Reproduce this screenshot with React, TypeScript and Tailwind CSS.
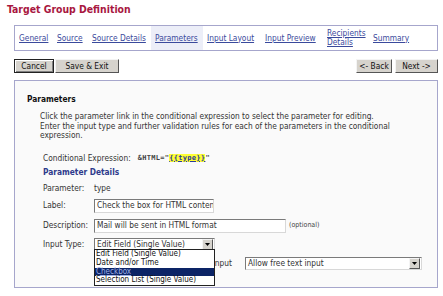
import React from "react";

const F = { fontFamily: '"DejaVu Sans Condensed", "DejaVu Sans", sans-serif' };

function NavItem({ w, children, active }: { w: string; children: React.ReactNode; active?: boolean }) {
  return (
    <div className={`${w} h-full flex items-center pl-[4px] ${active ? "bg-[#eceef8]" : ""}`}>
      <span className="text-[#3a4a9c] underline leading-[9px]">{children}</span>
    </div>
  );
}

function Btn({ w, children, def }: { w: string; children: React.ReactNode; def?: boolean }) {
  return (
    <div
      className={`${w} h-[14px] flex items-center justify-center bg-[#d6d3cd] text-[#111] ${
        def
          ? "border border-[#222] shadow-[inset_1px_1px_0_#fff,inset_-1px_-1px_0_#808080]"
          : "border-t border-l border-t-[#f4f4f4] border-l-[#f4f4f4] border-r border-b border-r-[#555] border-b-[#555]"
      }`}
    >
      {children}
    </div>
  );
}

function Arrow() {
  return (
    <div className="w-[11px] h-[11px] bg-[#d6d3cd] border border-t-[#f4f4f4] border-l-[#f4f4f4] border-r-[#555] border-b-[#555] flex items-center justify-center">
      <svg width="5" height="3" viewBox="0 0 5 3">
        <path d="M0 0 H5 L2.5 3 Z" fill="#000" />
      </svg>
    </div>
  );
}

export default function App() {
  return (
    <div className="w-[443px] h-[296px] bg-white overflow-hidden relative text-[8.3px] text-[#222]" style={F}>
      <div className="pl-[7px] pt-[3px] h-[25px]">
        <div className="text-[10.4px] font-bold text-[#a8173f] leading-[13px]">Target Group Definition</div>
      </div>
      <div className="ml-[14px] w-[424px] h-[26px] border border-[#a6a6cc] flex items-stretch bg-white">
        <NavItem w="w-[38px]">General</NavItem>
        <NavItem w="w-[35px]">Source</NavItem>
        <NavItem w="w-[63px]">Source Details</NavItem>
        <NavItem w="w-[52px]" active>Parameters</NavItem>
        <NavItem w="w-[58px]">Input Layout</NavItem>
        <NavItem w="w-[62px]">Input Preview</NavItem>
        <NavItem w="w-[46px]">
          Recipients
          <br />
          Details
        </NavItem>
        <NavItem w="w-[46px]">Summary</NavItem>
      </div>
      <div className="ml-[14px] w-[424px] mt-[8px] flex justify-between">
        <div className="flex gap-[1px]">
          <Btn w="w-[40px]" def>Cancel</Btn>
          <Btn w="w-[64px]">Save &amp; Exit</Btn>
        </div>
        <div className="flex gap-[3px]">
          <Btn w="w-[36px]">&lt;- Back</Btn>
          <Btn w="w-[43px]">Next -&gt;</Btn>
        </div>
      </div>
      <div className="ml-[14px] w-[424px] mt-[7px] h-[208px] border border-[#a6a6cc] bg-[#fafafa] relative">
        <div className="pl-[12px] pt-[13px] font-bold leading-[10px] text-[#111]">Parameters</div>
        <div className="pl-[25px] mt-[8px] leading-[9.5px] whitespace-nowrap text-[#333]">
          <div>Click the parameter link in the conditional expression to select the parameter for editing.</div>
          <div>Enter the input type and further validation rules for each of the parameters in the conditional</div>
          <div>expression.</div>
        </div>
        <div className="pl-[28px] mt-[12px] leading-[10px] flex items-center text-[#333]">
          <span>Conditional Expression:</span>
          <span
            className="ml-[7px] text-[7px] font-bold text-[#444] tracking-[0.3px]"
            style={{ fontFamily: '"DejaVu Sans Mono", monospace' }}
          >
            &amp;HTML=&quot;<span className="bg-[#ffff33] text-[#2a3a9c] underline">{"{{type}}"}</span>&quot;
          </span>
        </div>
        <div className="pl-[28px] mt-[4px] leading-[10px] font-bold text-[#2e3a8c]">Parameter Details</div>
        <div className="pl-[28px] mt-[6px] leading-[10px] flex text-[#333]">
          <span className="w-[51px]">Parameter:</span>
          <span>type</span>
        </div>
        <div className="pl-[28px] mt-[6px] flex items-center text-[#333]">
          <span className="w-[51px]">Label:</span>
          <div className="w-[120px] h-[14px] bg-white border border-t-[#7a7a7a] border-l-[#7a7a7a] border-r-[#d8d8d8] border-b-[#d8d8d8] flex items-center pl-[2px] overflow-hidden whitespace-nowrap">
            Check the box for HTML content
          </div>
        </div>
        <div className="pl-[28px] mt-[6px] flex items-center text-[#333]">
          <span className="w-[51px]">Description:</span>
          <div className="w-[192px] h-[14px] bg-white border border-t-[#7a7a7a] border-l-[#7a7a7a] border-r-[#d8d8d8] border-b-[#d8d8d8] flex items-center pl-[2px] overflow-hidden whitespace-nowrap">
            Mail will be sent in HTML format
          </div>
          <span className="ml-[3px] text-[7px] text-[#444]">(optional)</span>
        </div>
        <div className="pl-[28px] mt-[5px] flex items-center text-[#333]">
          <span className="w-[51px]">Input Type:</span>
          <div className="w-[121px] h-[13px] bg-white border border-t-[#7a7a7a] border-l-[#7a7a7a] border-r-[#d8d8d8] border-b-[#d8d8d8] flex items-center justify-between pl-[2px] pr-[1px] whitespace-nowrap">
            <span>Edit Field (Single Value)</span>
            <Arrow />
          </div>
        </div>
        <div className="pl-[28px] mt-[6px] flex items-center text-[#333]">
          <span className="w-[51px]"></span>
          <span className="w-[138px] text-right whitespace-nowrap">Free text input</span>
          <div className="ml-[13px] w-[177px] h-[13px] bg-white border border-t-[#7a7a7a] border-l-[#7a7a7a] border-r-[#d8d8d8] border-b-[#d8d8d8] flex items-center justify-between pl-[2px] pr-[1px] whitespace-nowrap">
            <span>Allow free text input</span>
            <Arrow />
          </div>
        </div>
        <div className="absolute left-[79px] top-[168px] w-[121px] border border-[#222] bg-white leading-[8.75px] text-[8px] text-[#111] whitespace-nowrap">
          <div className="pl-[1px]">Edit Field (Single Value)</div>
          <div className="pl-[1px]">Date and/or Time</div>
          <div className="pl-[1px] bg-[#0c2466] text-[#9fb0e6] underline">Checkbox</div>
          <div className="pl-[1px]">Selection List (Single Value)</div>
        </div>
      </div>
    </div>
  );
}
